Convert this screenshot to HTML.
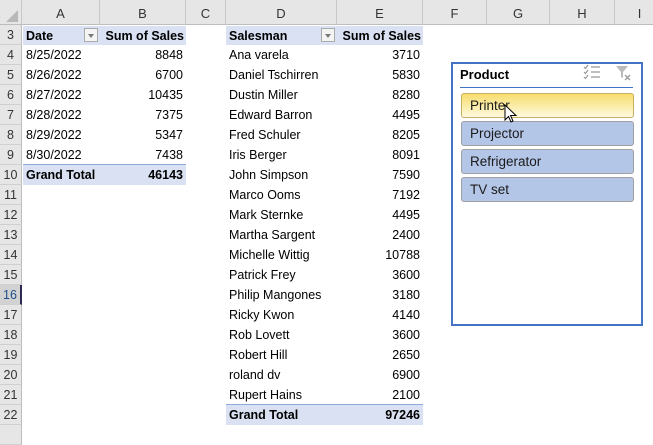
<!DOCTYPE html>
<html><head><meta charset="utf-8"><style>
*{margin:0;padding:0;box-sizing:border-box}
body{width:653px;height:431px;overflow:hidden;background:#fff;font-family:"Liberation Sans",Calibri,sans-serif;font-size:12.5px;color:#000;position:relative}
.a{position:absolute}
.ch{position:absolute;top:0;height:25px;background:#e6e6e6;border-right:1px solid #c8c8c8;border-bottom:1px solid #bdbdbd;text-align:center;line-height:28px;color:#333;font-size:13px}
.rh{position:absolute;left:0;width:22px;height:20px;background:#e6e6e6;border-right:1px solid #bdbdbd;border-bottom:1px solid #d0d0d0;text-align:center;line-height:20px;color:#333;font-size:12.5px}
.c{position:absolute;height:20px;line-height:20px;white-space:nowrap;padding:0 3px}
.r{text-align:right}
.b{font-weight:bold}
.hd{background:#d9e1f2}
.gt{background:#d9e1f2;border-top:1px solid #8ea9db}
.dd{position:absolute;width:14px;height:14px;border:1px solid #aaa;background:#f4f4f4}
.dd:after{content:"";position:absolute;left:3px;top:5px;border-left:3px solid transparent;border-right:3px solid transparent;border-top:4px solid #777}
.it{position:absolute;left:461px;width:173px;height:25px;border:1px solid #a0a0a0;border-radius:3px;background:#b4c6e7;line-height:23px;padding-left:8px;font-size:13.5px;color:#1a1a1a}
</style></head><body>
<div class="ch" style="left:0;width:22px"><div class="a" style="left:6px;top:10px;width:0;height:0;border-left:12px solid transparent;border-bottom:12px solid #b8b8b8"></div></div>
<div class="ch" style="left:22px;width:78px">A</div>
<div class="ch" style="left:100px;width:86px">B</div>
<div class="ch" style="left:186px;width:40px">C</div>
<div class="ch" style="left:226px;width:111px">D</div>
<div class="ch" style="left:337px;width:86px">E</div>
<div class="ch" style="left:423px;width:64px">F</div>
<div class="ch" style="left:487px;width:63px">G</div>
<div class="ch" style="left:550px;width:65px">H</div>
<div class="ch" style="left:615px;width:50px">I</div>

<div class="rh" style="top:25px">3</div><div class="rh" style="top:45px">4</div><div class="rh" style="top:65px">5</div><div class="rh" style="top:85px">6</div><div class="rh" style="top:105px">7</div><div class="rh" style="top:125px">8</div><div class="rh" style="top:145px">9</div><div class="rh" style="top:165px">10</div><div class="rh" style="top:185px">11</div><div class="rh" style="top:205px">12</div><div class="rh" style="top:225px">13</div><div class="rh" style="top:245px">14</div><div class="rh" style="top:265px">15</div><div class="rh" style="top:285px;background:#d2d2d2;border-right:2px solid #2a2a50;color:#1a4f8a">16</div><div class="rh" style="top:305px">17</div><div class="rh" style="top:325px">18</div><div class="rh" style="top:345px">19</div><div class="rh" style="top:365px">20</div><div class="rh" style="top:385px">21</div><div class="rh" style="top:405px">22</div><div class="rh" style="top:425px"></div>

<!-- Pivot 1 -->
<div class="c b hd" style="left:23px;top:26px;width:77px;height:19px">Date</div>
<div class="dd" style="left:84px;top:28px"></div>
<div class="c b hd r" style="left:100px;top:26px;width:86px;height:19px;padding:0 2px">Sum of Sales</div>
<div class="c" style="left:23px;top:45px">8/25/2022</div><div class="c r" style="left:100px;top:45px;width:86px">8848</div>
<div class="c" style="left:23px;top:65px">8/26/2022</div><div class="c r" style="left:100px;top:65px;width:86px">6700</div>
<div class="c" style="left:23px;top:85px">8/27/2022</div><div class="c r" style="left:100px;top:85px;width:86px">10435</div>
<div class="c" style="left:23px;top:105px">8/28/2022</div><div class="c r" style="left:100px;top:105px;width:86px">7375</div>
<div class="c" style="left:23px;top:125px">8/29/2022</div><div class="c r" style="left:100px;top:125px;width:86px">5347</div>
<div class="c" style="left:23px;top:145px">8/30/2022</div><div class="c r" style="left:100px;top:145px;width:86px">7438</div>
<div class="c b gt" style="left:23px;top:164px;width:163px;height:21px">Grand Total</div>
<div class="c b r" style="left:100px;top:165px;width:86px">46143</div>

<!-- Pivot 2 -->
<div class="c b hd" style="left:226px;top:26px;width:111px;height:19px">Salesman</div>
<div class="dd" style="left:321px;top:28px"></div>
<div class="c b hd r" style="left:337px;top:26px;width:86px;height:19px;padding:0 2px">Sum of Sales</div>
<div class="c" style="left:226px;top:45px">Ana varela</div><div class="c r" style="left:337px;top:45px;width:86px">3710</div>
<div class="c" style="left:226px;top:65px">Daniel Tschirren</div><div class="c r" style="left:337px;top:65px;width:86px">5830</div>
<div class="c" style="left:226px;top:85px">Dustin Miller</div><div class="c r" style="left:337px;top:85px;width:86px">8280</div>
<div class="c" style="left:226px;top:105px">Edward Barron</div><div class="c r" style="left:337px;top:105px;width:86px">4495</div>
<div class="c" style="left:226px;top:125px">Fred Schuler</div><div class="c r" style="left:337px;top:125px;width:86px">8205</div>
<div class="c" style="left:226px;top:145px">Iris Berger</div><div class="c r" style="left:337px;top:145px;width:86px">8091</div>
<div class="c" style="left:226px;top:165px">John Simpson</div><div class="c r" style="left:337px;top:165px;width:86px">7590</div>
<div class="c" style="left:226px;top:185px">Marco Ooms</div><div class="c r" style="left:337px;top:185px;width:86px">7192</div>
<div class="c" style="left:226px;top:205px">Mark Sternke</div><div class="c r" style="left:337px;top:205px;width:86px">4495</div>
<div class="c" style="left:226px;top:225px">Martha Sargent</div><div class="c r" style="left:337px;top:225px;width:86px">2400</div>
<div class="c" style="left:226px;top:245px">Michelle Wittig</div><div class="c r" style="left:337px;top:245px;width:86px">10788</div>
<div class="c" style="left:226px;top:265px">Patrick Frey</div><div class="c r" style="left:337px;top:265px;width:86px">3600</div>
<div class="c" style="left:226px;top:285px">Philip Mangones</div><div class="c r" style="left:337px;top:285px;width:86px">3180</div>
<div class="c" style="left:226px;top:305px">Ricky Kwon</div><div class="c r" style="left:337px;top:305px;width:86px">4140</div>
<div class="c" style="left:226px;top:325px">Rob Lovett</div><div class="c r" style="left:337px;top:325px;width:86px">3600</div>
<div class="c" style="left:226px;top:345px">Robert Hill</div><div class="c r" style="left:337px;top:345px;width:86px">2650</div>
<div class="c" style="left:226px;top:365px">roland dv</div><div class="c r" style="left:337px;top:365px;width:86px">6900</div>
<div class="c" style="left:226px;top:385px">Rupert Hains</div><div class="c r" style="left:337px;top:385px;width:86px">2100</div>
<div class="c b gt" style="left:226px;top:404px;width:197px;height:21px">Grand Total</div>
<div class="c b r" style="left:337px;top:405px;width:86px">97246</div>

<!-- Slicer -->
<div class="a" style="left:451px;top:62px;width:192px;height:264px;border:2px solid #4472c4;background:#fff"></div>
<div class="a b" style="left:460px;top:67px;font-size:13px;line-height:16px">Product</div>
<div class="a" style="left:460px;top:87px;width:173px;height:1px;background:#4472c4"></div>
<svg class="a" style="left:583px;top:64px" width="20" height="18" viewBox="0 0 20 18" fill="none" stroke="#999" stroke-width="1.2">
<path d="M1 3l1.5 1.5L5 1M1 8l1.5 1.5L5 6M1 13l1.5 1.5L5 11"/><path d="M8 3h9M8 8h9M8 13h9"/></svg>
<svg class="a" style="left:615px;top:64px" width="18" height="18" viewBox="0 0 18 18">
<path d="M1 2h12l-5 6v6l-2-1V8z" fill="#bbb"/><path d="M10 11l5 5M15 11l-5 5" stroke="#999" stroke-width="1.3"/></svg>
<div class="it" style="top:93px;background:linear-gradient(#f7dd6f,#fbeeb0 60%,#fff9e0);border-color:#c8b060">Printer</div>
<div class="it" style="top:121px">Projector</div>
<div class="it" style="top:149px">Refrigerator</div>
<div class="it" style="top:177px">TV set</div>
<svg class="a" style="left:504px;top:104px" width="14" height="20" viewBox="0 0 14 20"><path d="M1 1v15l3.5-3.5 2.5 5.5 2-1-2.5-5.5H12z" fill="#fff" stroke="#000" stroke-width="1"/></svg>
</body></html>
